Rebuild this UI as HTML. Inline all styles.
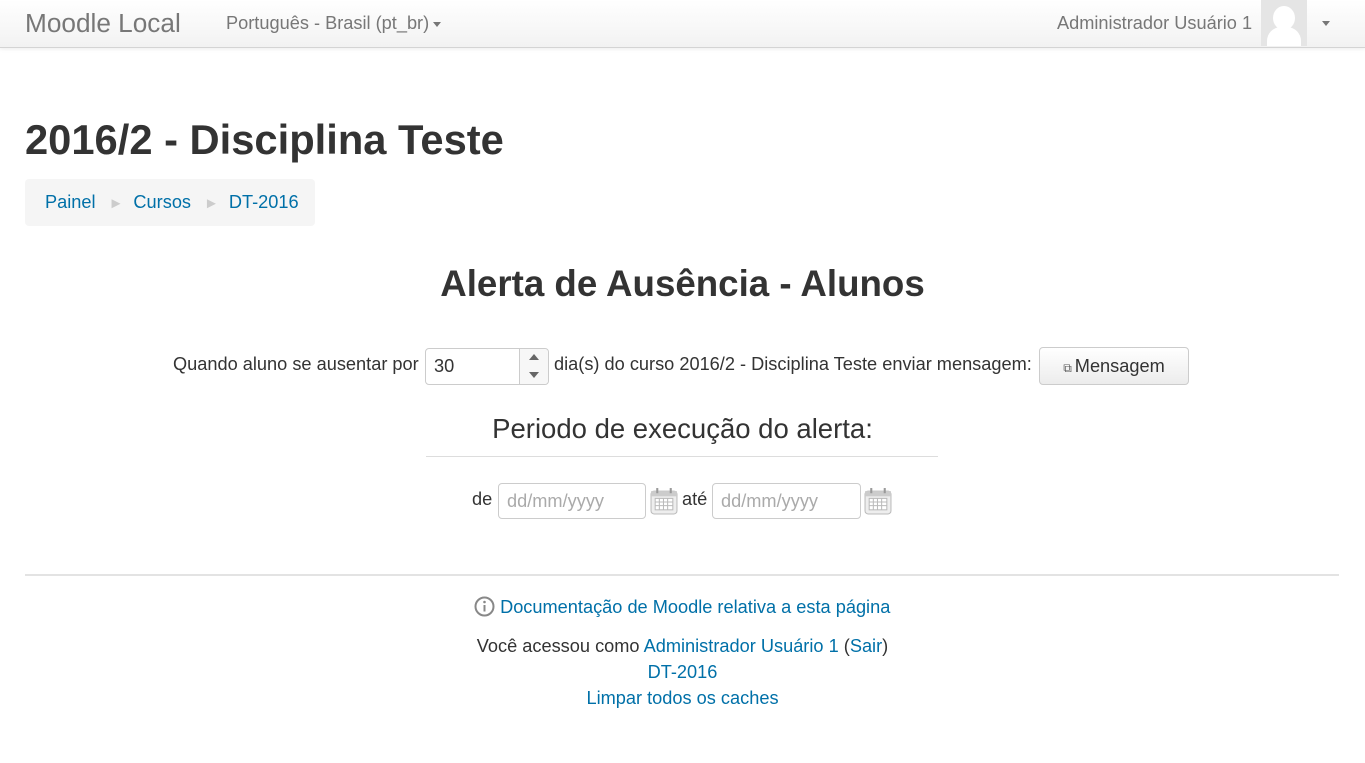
<!DOCTYPE html>
<html><head><meta charset="utf-8"><style>
*{box-sizing:border-box}
body{margin:0;width:1365px;height:763px;overflow:hidden;font-family:"Liberation Sans",sans-serif;color:#333;background:#fff;font-size:18.2px}
a{color:#0070a8;text-decoration:none}
.nav{position:absolute;top:0;left:0;width:1365px;height:48px;background:linear-gradient(#fff,#f2f2f2);border-bottom:1px solid #d4d4d4;box-shadow:0 1px 4px rgba(0,0,0,.08)}
.abs{position:absolute;white-space:nowrap}
.caret{display:inline-block;width:0;height:0;border-left:4.5px solid transparent;border-right:4.5px solid transparent;border-top:5px solid #777;vertical-align:middle;margin-left:4px}
.inp{position:absolute;border:1px solid #ccc;border-radius:4px;background:#fff;height:36px;font-size:18.2px;padding:7px 8px}
.cal{position:absolute;width:28px;height:28px}
</style></head><body>
<div class="nav">
 <div class="abs" style="left:25px;top:8px;font-size:26.2px;color:#777">Moodle Local</div>
 <div class="abs" style="left:226px;top:13px;color:#777">Português - Brasil (pt_br)<span class="caret"></span></div>
 <div class="abs" style="left:1057px;top:13px;color:#777">Administrador Usuário 1</div>
 <div class="abs" style="left:1261px;top:0;width:46px;height:46px;background:#e5e5e5;overflow:hidden">
  <div style="position:absolute;left:12px;top:6px;width:22px;height:24px;border-radius:50%;background:#fff"></div>
  <div style="position:absolute;left:6px;top:27px;width:34px;height:30px;border-radius:14px 14px 0 0;background:#fff"></div>
 </div>
 <div class="abs" style="left:1318px;top:12px"><span class="caret"></span></div>
</div>
<div class="abs" style="left:25px;top:116px;font-size:41.7px;font-weight:bold;color:#333">2016/2 - Disciplina Teste</div>
<div class="abs" style="left:25px;top:179px;width:290px;height:47px;background:#f5f5f5;border-radius:4px"></div>
<div class="abs" style="left:45px;top:192px"><a>Painel</a><span style="color:#ccc;font-size:15px;margin:0 10px 0 13px">►</span><a>Cursos</a><span style="color:#ccc;font-size:15px;margin:0 10px 0 13px">►</span><a>DT-2016</a></div>
<div class="abs" style="left:0;width:1365px;text-align:center;top:263px;font-size:36.7px;font-weight:bold;padding-left:0">Alerta de Ausência - Alunos</div>
<div class="abs" style="left:173px;top:354px">Quando aluno se ausentar por</div>
<div class="inp" style="left:425px;top:348px;width:124px;height:37px">30</div>
<div class="abs" style="left:519px;top:349px;width:29px;height:35px;border-left:1px solid #ccc;background:#f7f7f7;border-radius:0 4px 4px 0"></div>
<div class="abs" style="left:529px;top:354px;width:0;height:0;border-left:5px solid transparent;border-right:5px solid transparent;border-bottom:6px solid #666"></div>
<div class="abs" style="left:529px;top:372px;width:0;height:0;border-left:5px solid transparent;border-right:5px solid transparent;border-top:6px solid #666"></div>
<div class="abs" style="left:554px;top:354px">dia(s) do curso 2016/2 - Disciplina Teste enviar mensagem:</div>
<div class="abs" style="left:1039px;top:347px;width:150px;height:38px;border:1px solid #ccc;border-radius:4px;background:linear-gradient(#fff,#ececec);text-align:center;padding-top:8px"><span style="font-size:12px;color:#555;margin-right:3px">⧉</span>Mensagem</div>
<div class="abs" style="left:0;width:1365px;text-align:center;top:413px;font-size:27.5px">Periodo de execução do alerta:</div>
<div class="abs" style="left:426px;top:456px;width:512px;border-top:1px solid #ddd"></div>
<div class="abs" style="left:472px;top:489px">de</div>
<div class="inp" style="left:498px;top:483px;width:148px;color:#aaa">dd/mm/yyyy</div>
<svg class="cal" style="left:650px;top:487px" viewBox="0 0 27 27"><rect x="1" y="4" width="25" height="22" rx="3" fill="#eee" stroke="#bbb"/><rect x="1" y="4" width="25" height="5" fill="#ccc"/><rect x="5" y="11" width="17" height="11" fill="#fff" stroke="#bbb"/><path d="M5 14.5h17M5 18h17M9 11v11M13 11v11M17 11v11" stroke="#bbb"/><rect x="6" y="1" width="2" height="5" fill="#999"/><rect x="19" y="1" width="2" height="5" fill="#999"/></svg>
<div class="abs" style="left:682px;top:489px">até</div>
<div class="inp" style="left:712px;top:483px;width:149px;color:#aaa">dd/mm/yyyy</div>
<svg class="cal" style="left:864px;top:487px" viewBox="0 0 27 27"><rect x="1" y="4" width="25" height="22" rx="3" fill="#eee" stroke="#bbb"/><rect x="1" y="4" width="25" height="5" fill="#ccc"/><rect x="5" y="11" width="17" height="11" fill="#fff" stroke="#bbb"/><path d="M5 14.5h17M5 18h17M9 11v11M13 11v11M17 11v11" stroke="#bbb"/><rect x="6" y="1" width="2" height="5" fill="#999"/><rect x="19" y="1" width="2" height="5" fill="#999"/></svg>
<div class="abs" style="left:25px;top:574px;width:1314px;border-top:2px solid #e3e3e3"></div>
<div class="abs" style="left:474px;top:596px"><svg width="21" height="21" viewBox="0 0 21 21" style="vertical-align:-4px"><circle cx="10.5" cy="10.5" r="9" fill="none" stroke="#888" stroke-width="2"/><rect x="9.5" y="9" width="2" height="6.5" fill="#888"/><circle cx="10.5" cy="6" r="1.3" fill="#888"/></svg> <a>Documentação de Moodle relativa a esta página</a></div>
<div class="abs" style="left:0;width:1365px;text-align:center;top:636px">Você acessou como <a>Administrador Usuário 1</a> (<a>Sair</a>)</div>
<div class="abs" style="left:0;width:1365px;text-align:center;top:662px"><a>DT-2016</a></div>
<div class="abs" style="left:0;width:1365px;text-align:center;top:688px"><a>Limpar todos os caches</a></div>
</body></html>
